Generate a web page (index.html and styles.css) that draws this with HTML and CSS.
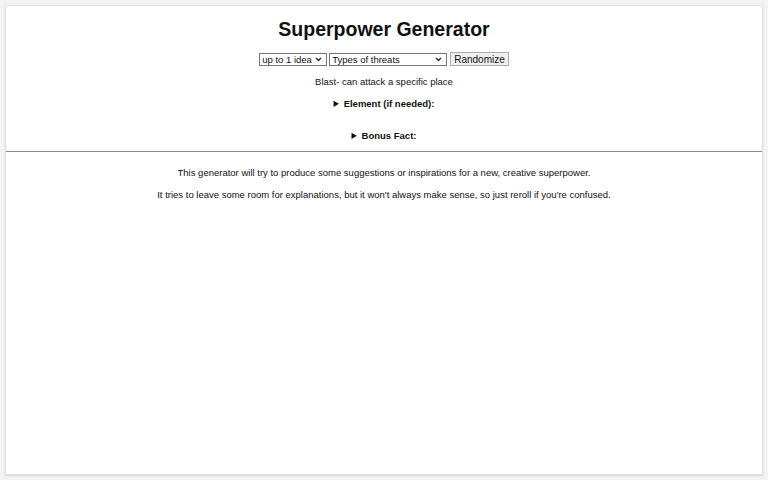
FILE: index.html
```html
<!DOCTYPE html>
<html lang="en">

<head>
  <meta charset="UTF-8">
  <meta name="viewport" content="width=device-width, initial-scale=1.0">
  <title>Superpower Generator</title>
  <link rel="stylesheet" href="styles.css">
</head>

<body>
  <div class="page">
    <h1>Superpower Generator</h1>

    <!-- Generator controls -->
    <div class="controls">
      <select id="count" class="dropdown count">
        <option>up to 1 idea</option>
        <option>up to 2 ideas</option>
        <option>up to 3 ideas</option>
      </select>
      <select id="category" class="dropdown category">
        <option>Types of threats</option>
        <option>Abilities</option>
        <option>Transformations</option>
      </select>
      <button id="randomize" class="btn">Randomize</button>
    </div>

    <p class="result" id="result">Blast- can attack a specific place</p>

    <details class="extra">
      <summary>Element (if needed):</summary>
      <p>Fire</p>
    </details>

    <details class="extra bonus">
      <summary>Bonus Fact:</summary>
      <p>Works best at night.</p>
    </details>

    <hr>

    <div class="about">
      <p>This generator will try to produce some suggestions or inspirations for a new, creative superpower.</p>
      <p>It tries to leave some room for explanations, but it won't always make sense, so just reroll if you're confused.</p>
    </div>
  </div>
</body>

</html>
```

FILE: styles.css
```css
html, body {
  height: 100%;
}

body {
  font-family: 'Liberation Sans', Arial, sans-serif;
  margin: 0;
  padding: 5px;
  box-sizing: border-box;
  background-color: #f3f3f3;
  color: #111;
}

.page {
  height: 100%;
  box-sizing: border-box;
  background-color: white;
  border: 1px solid #e2e2e2;
  box-shadow: 0 1px 2px rgba(0, 0, 0, 0.12);
  text-align: center;
  padding-top: 11px;
}

h1 {
  margin: 0 0 11px;
  font-size: 19.5px;
  line-height: 24px;
}

.controls {
  display: flex;
  justify-content: center;
  align-items: center;
  gap: 2px;
}

/* native arrow is too wide at this size, draw a small chevron instead */
.dropdown {
  appearance: none;
  -webkit-appearance: none;
  font-family: inherit;
  font-size: 9.5px;
  height: 13px;
  padding: 0 12px 0 2px;
  text-align: left;
  border: 1px solid #767676;
  border-radius: 0;
  background-color: white;
  background-image: url("data:image/svg+xml,%3Csvg xmlns='http://www.w3.org/2000/svg' width='7' height='5' viewBox='0 0 7 5'%3E%3Cpath d='M1 1l2.5 2.5L6 1' fill='none' stroke='%23222' stroke-width='1.3'/%3E%3C/svg%3E");
  background-repeat: no-repeat;
  background-position: right 4px center;
  color: #111;
}

.count {
  width: 68px;
}

.category {
  width: 118px;
}

.btn {
  font-family: inherit;
  font-size: 10px;
  height: 14px;
  padding: 0 3px;
  margin-left: 1px;
  border: 1px solid #aaa;
  border-radius: 0;
  background-color: #efefef;
  color: #111;
}

.result {
  margin: 10px 0 0;
  font-size: 9.5px;
  line-height: 12px;
}

.extra {
  font-size: 9.5px;
  line-height: 12px;
  margin-top: 10px;
}

.extra summary {
  font-weight: bold;
  cursor: pointer;
}

.bonus {
  margin-top: 20px;
}

hr {
  margin: 9px 0 0;
  border: none;
  border-top: 1px solid #8a8a8a;
}

.about {
  font-size: 9.5px;
  line-height: 12px;
  padding-top: 15px;
}

.about p {
  margin: 0 0 10px;
}
```
